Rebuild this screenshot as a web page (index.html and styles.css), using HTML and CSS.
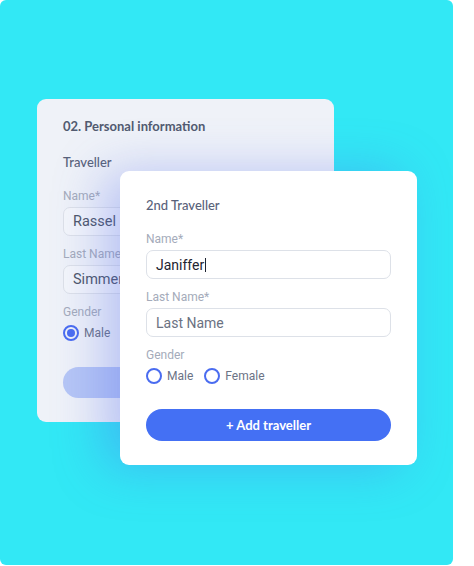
FILE: index.html
```html
<!DOCTYPE html>
<html>
<head>
<meta charset="utf-8">
<link rel="stylesheet" href="styles.css">
</head>
<body>
<div class="panel">
  <div class="card back">
    <div class="title">02. Personal information</div>
    <div class="subtitle">Traveller</div>
    <div class="label">Name*</div>
    <div class="input soft">Rassel</div>
    <div class="label">Last Name*</div>
    <div class="input soft">Simmens</div>
    <div class="label">Gender</div>
    <div class="radios">
      <span class="radio"><span class="dot checked"></span>Male</span>
    </div>
    <div class="btn pale"></div>
  </div>

  <div class="card front">
    <div class="subtitle first">2nd Traveller</div>
    <div class="label">Name*</div>
    <div class="input"><span class="value">Janiffer</span><span class="caret"></span></div>
    <div class="label">Last Name*</div>
    <div class="input"><span class="placeholder">Last Name</span></div>
    <div class="label">Gender</div>
    <div class="radios">
      <span class="radio"><span class="dot"></span>Male</span>
      <span class="radio"><span class="dot"></span>Female</span>
    </div>
    <div class="btn">+ Add traveller</div>
  </div>
</div>
</body>
</html>
```
FILE: styles.css
```css
* { box-sizing: border-box; }
html, body { margin: 0; padding: 0; background: #ffffff; }
body { font-family: Roboto, "Liberation Sans", sans-serif; }

.panel {
  position: relative;
  width: 453px;
  height: 565px;
  background: #32E8F5;
  border-radius: 6px;
  padding: 99px 0 0 37px;
  overflow: hidden;
}

.card {
  width: 297px;
  border-radius: 9px;
  padding-left: 26px;
  display: flex;
  flex-direction: column;
  align-items: flex-start;
}

.back {
  height: 323px;
  background: #EFF2F8;
  padding-top: 17px;
}

.front {
  position: absolute;
  left: 120px;
  top: 171px;
  height: 294px;
  background: #ffffff;
  padding-top: 24px;
  box-shadow: -16px 2px 50px rgba(80, 105, 235, 0.36);
}

.title {
  font-family: Lato, "Open Sans", sans-serif;
  font-weight: 700;
  font-size: 13px;
  line-height: 20px;
  color: #525B70;
}

.subtitle {
  font-family: Lato, "Open Sans", sans-serif;
  font-weight: 500;
  font-size: 13px;
  line-height: 20px;
  color: #59627A;
  margin-top: 16px;
}
.subtitle.first { margin-top: 0; }

.label {
  font-size: 12px;
  line-height: 16px;
  color: #A4ABBA;
  margin-top: 16px;
}
.input + .label { margin-top: 10px; }

.input {
  margin-top: 3px;
  width: 245px;
  height: 29px;
  border: 1px solid #DDE1E8;
  border-radius: 7px;
  background: #ffffff;
  padding-left: 9px;
  display: flex;
  align-items: center;
  font-size: 14px;
  color: #1E2431;
}
.input.soft {
  background: #F4F6FA;
  color: #4E5668;
  padding-left: 9px;
  font-size: 14.5px;
}
.placeholder { color: #6B7282; }
.caret {
  display: inline-block;
  width: 1px;
  height: 14px;
  margin-left: 1px;
  background: #1E2431;
}

.radios {
  margin-top: 3px;
  height: 20px;
  display: flex;
  align-items: center;
  gap: 11px;
}
.radio {
  display: flex;
  align-items: center;
  gap: 5px;
  font-size: 12px;
  color: #6B7386;
}
.dot {
  width: 16px;
  height: 16px;
  border-radius: 50%;
  border: 2px solid #4A6CF0;
  display: flex;
  align-items: center;
  justify-content: center;
}
.dot.checked::after {
  content: "";
  width: 8px;
  height: 8px;
  border-radius: 50%;
  background: #4A6CF0;
}

.btn {
  margin-top: 23px;
  width: 245px;
  height: 32px;
  border-radius: 16px;
  background: #4470F4;
  color: #ffffff;
  font-family: Lato, "Open Sans", sans-serif;
  font-weight: 700;
  font-size: 13px;
  display: flex;
  align-items: center;
  justify-content: center;
}
.btn.pale {
  margin-top: 24px;
  height: 31px;
  background: #B6C6F5;
}
```
